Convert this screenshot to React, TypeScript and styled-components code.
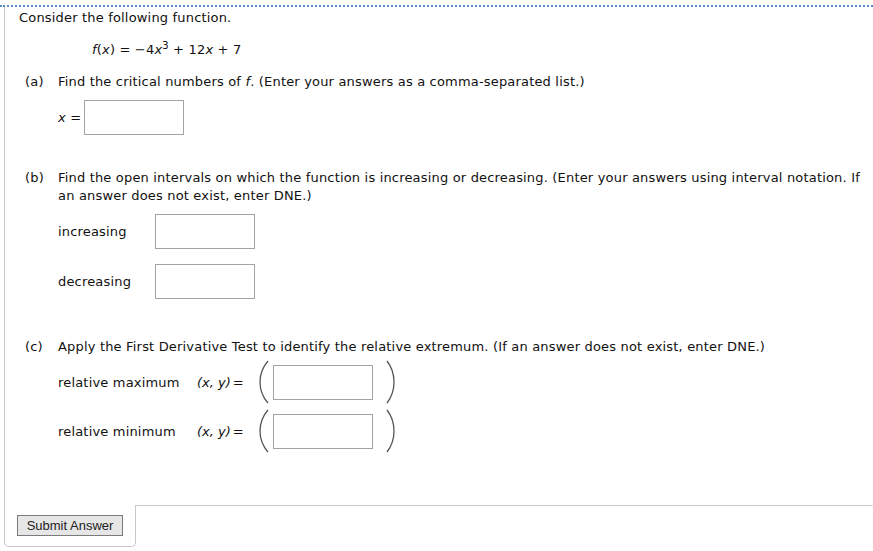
import styled, { createGlobalStyle } from "styled-components";

const Global = createGlobalStyle`
  html, body {
    margin: 0;
    padding: 0;
    background: #fff;
  }
  body {
    font-family: "DejaVu Sans", Verdana, sans-serif;
    font-size: 13px;
    letter-spacing: 0.18px;
    color: #111;
  }
`;

const Page = styled.div`
  width: 873px;
  height: 551px;
  padding-top: 5px;
  box-sizing: border-box;
  overflow: hidden;
`;

const TopRule = styled.div`
  border-top: 2px dotted #5a8fc4;
`;

const Panel = styled.div`
  margin-left: 4px;
  border-left: 1px solid #c8c8c8;
  padding: 2px 0 0 14px;
  height: 498px;
  box-sizing: border-box;
`;

const Line = styled.div<{ mt?: number; indent?: number }>`
  line-height: 18px;
  margin-top: ${(p) => p.mt ?? 0}px;
  padding-left: ${(p) => p.indent ?? 0}px;
`;

const Part = styled.div<{ mt: number }>`
  display: grid;
  grid-template-columns: 33px 1fr;
  padding-left: 6px;
  margin-top: ${(p) => p.mt}px;
  line-height: 18px;
`;

const PartBody = styled.div`
  padding-right: 6px;
`;

const Row = styled.div<{ mt: number; labelWidth: number }>`
  display: flex;
  align-items: center;
  margin-top: ${(p) => p.mt}px;
  padding-left: 39px;
  white-space: nowrap;
  & > * {
    flex-shrink: 0;
  }
  & > span:first-child {
    width: ${(p) => p.labelWidth}px;
  }
`;

const Label = styled.span``;

const Box = styled.div<{ w?: number }>`
  width: ${(p) => p.w ?? 98}px;
  height: 33px;
  border: 1px solid #a3a3a3;
  background: #fff;
  box-sizing: content-box;
`;

const Pair = styled.span`
  font-style: italic;
  letter-spacing: 0;
  margin-right: 2px;
`;

const Eq = styled.span`
  width: 24px;
`;

const Paren = styled.svg`
  display: block;
`;

const Footer = styled.div`
  display: flex;
  align-items: flex-start;
`;

const Tab = styled.div`
  margin-left: 4px;
  width: 118px;
  padding: 10px 0 10px 12px;
  border: 1px solid #c8c8c8;
  border-top: none;
  border-radius: 0 0 5px 5px;
`;

const Rest = styled.div`
  flex: 1;
  border-top: 1px solid #c8c8c8;
  border-top-right-radius: 4px;
`;

const SubmitButton = styled.button`
  font-family: "Liberation Sans", Arial, sans-serif;
  font-size: 13px;
  letter-spacing: 0;
  color: #222;
  background: #e6e6e6;
  border: 1px solid #7a7a7a;
  padding: 2px 0;
  height: 21px;
  line-height: 15px;
  width: 106px;
  border-radius: 0;
`;

const I = styled.i`
  font-style: italic;
`;

const Sup = styled.sup`
  font-size: 10px;
  line-height: 0;
`;

const Open = () => (
  <Paren width="16" height="44" viewBox="0 0 16 44">
    <path d="M11 1 Q3 10 3 22 Q3 34 11 43" fill="none" stroke="#555" strokeWidth="1.3" />
  </Paren>
);

const Close = () => (
  <Paren width="22" height="44" viewBox="0 0 22 44">
    <path d="M14 1 Q21 10 21 22 Q21 34 14 43" fill="none" stroke="#555" strokeWidth="1.3" />
  </Paren>
);

export default function App() {
  return (
    <Page>
      <Global />
      <TopRule />
      <Panel>
        <Line>Consider the following function.</Line>
        <Line mt={14} indent={73}>
          <I>f</I>(<I>x</I>) = −4<I>x</I>
          <Sup>3</Sup> + 12<I>x</I> + 7
        </Line>
        <Part mt={14}>
          <span>(a)</span>
          <PartBody>
            Find the critical numbers of <I>f</I>. (Enter your answers as a comma-separated list.)
          </PartBody>
        </Part>
        <Row mt={9} labelWidth={26}>
          <Label>
            <I>x</I> =
          </Label>
          <Box />
        </Row>
        <Part mt={34}>
          <span>(b)</span>
          <PartBody>
            Find the open intervals on which the function is increasing or decreasing. (Enter
            your answers using interval notation. If an answer does not exist, enter DNE.)
          </PartBody>
        </Part>
        <Row mt={9} labelWidth={97}>
          <Label>increasing</Label>
          <Box />
        </Row>
        <Row mt={15} labelWidth={97}>
          <Label>decreasing</Label>
          <Box />
        </Row>
        <Part mt={39}>
          <span>(c)</span>
          <PartBody>
            Apply the First Derivative Test to identify the relative extremum. (If an answer does
            not exist, enter DNE.)
          </PartBody>
        </Part>
        <Row mt={4} labelWidth={139}>
          <Label>relative maximum</Label>
          <Pair>(x, y)</Pair>
          <Eq>=</Eq>
          <Open />
          <Box />
          <Close />
        </Row>
        <Row mt={5} labelWidth={139}>
          <Label>relative minimum</Label>
          <Pair>(x, y)</Pair>
          <Eq>=</Eq>
          <Open />
          <Box />
          <Close />
        </Row>
      </Panel>
      <Footer>
        <Tab>
          <SubmitButton>Submit Answer</SubmitButton>
        </Tab>
        <Rest />
      </Footer>
    </Page>
  );
}
